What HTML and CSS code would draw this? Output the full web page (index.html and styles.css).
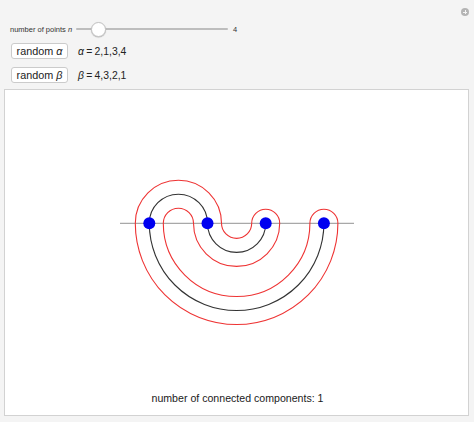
FILE: index.html
```html
<!DOCTYPE html>
<html>
<head>
<meta charset="utf-8">
<link rel="stylesheet" href="styles.css">
</head>
<body>
<div class="panel">
  <div class="plus"></div>
  <div class="row slider-row">
    <span class="label">number of points <i>n</i></span>
    <div class="slider"><div class="track"></div><div class="thumb"></div></div>
    <span class="value">4</span>
  </div>
  <div class="row btn-row first">
    <div class="btn"><span>random <i>α</i></span></div>
    <span class="perm"><i>α</i> = 2,1,3,4</span>
  </div>
  <div class="row btn-row">
    <div class="btn"><span>random <i>β</i></span></div>
    <span class="perm"><i>β</i> = 4,3,2,1</span>
  </div>
  <div class="plot">
    <svg class="fig" width="463" height="300" viewBox="5 90 463 300">
      <line x1="120" y1="223.3" x2="354" y2="223.3" stroke="#a8a8a8" stroke-width="1.2"/>
      <path d="M279.7 223.3 A43.1 43.1 0 0 1 193.5 223.3 A15.1 15.1 0 0 0 163.3 223.3 A73.3 73.3 0 0 0 309.9 223.3 A14 14 0 0 1 337.9 223.3 A101.3 101.3 0 0 1 135.3 223.3 A43.1 43.1 0 0 1 221.5 223.3 A15.1 15.1 0 0 0 251.7 223.3 A14 14 0 0 1 279.7 223.3 Z" fill="none" stroke="#ee3333" stroke-width="1.1"/>
      <path d="M265.7 223.3 A29.1 29.1 0 0 1 207.5 223.3 A29.1 29.1 0 0 0 149.3 223.3 A87.3 87.3 0 0 0 323.9 223.3" fill="none" stroke="#333" stroke-width="1.1"/>
      <circle cx="149.3" cy="223.3" r="6" fill="#0000f0"/>
      <circle cx="207.5" cy="223.3" r="6" fill="#0000f0"/>
      <circle cx="265.7" cy="223.3" r="6" fill="#0000f0"/>
      <circle cx="323.9" cy="223.3" r="6" fill="#0000f0"/>
    </svg>
    <div class="caption">number of connected components: 1</div>
  </div>
</div>
</body>
</html>
```
FILE: styles.css
```css
html, body {
  margin: 0;
  padding: 0;
}
body {
  width: 474px;
  height: 422px;
  background: #f4f4f4;
  font-family: "Liberation Sans", Arial, sans-serif;
  color: #222;
  overflow: hidden;
}
.panel {
  position: relative;
  height: 422px;
  box-sizing: border-box;
  padding-top: 20px;
  border-top: 3px solid #fafafa;
  margin-top: -3px;
}
.plus {
  position: absolute;
  right: 5px;
  top: 8px;
  width: 8px;
  height: 8px;
  border-radius: 50%;
  background: #b4b4b4;
}
.plus::before, .plus::after {
  content: "";
  position: absolute;
  background: #f4f4f4;
}
.plus::before { left: 2px; top: 3.5px; width: 4px; height: 1px; }
.plus::after { left: 3.5px; top: 2px; width: 1px; height: 4px; }
.row {
  display: flex;
  align-items: center;
}
.slider-row {
  height: 18px;
  padding-left: 10px;
}
.label {
  font-size: 7.5px;
  color: #333;
  width: 66px;
}
.slider {
  position: relative;
  width: 152px;
  height: 18px;
}
.track {
  position: absolute;
  left: 0;
  right: 0;
  top: 8px;
  height: 2px;
  background: #bdbdbd;
  border-radius: 1px;
}
.thumb {
  position: absolute;
  left: 15px;
  top: 2px;
  width: 13px;
  height: 13px;
  border-radius: 50%;
  background: #fff;
  border: 0.5px solid #c4c4c4;
  box-shadow: 0 0.5px 1px rgba(0,0,0,0.25);
}
.value {
  font-size: 7.5px;
  color: #333;
  margin-left: 5px;
}
.btn-row {
  padding-left: 11px;
  margin-top: 8px;
  height: 16px;
}
.btn-row.first {
  margin-top: 5px;
}
.btn {
  box-sizing: border-box;
  width: 57px;
  height: 16px;
  border: 1px solid #cbcbcb;
  border-radius: 3px;
  background: #fff;
  font-size: 10.8px;
  display: flex;
  align-items: center;
  justify-content: center;
  color: #222;
  white-space: nowrap;
}
.perm {
  margin-left: 10px;
  font-size: 10.4px;
  word-spacing: -0.6px;
  color: #222;
  white-space: nowrap;
}
.plot {
  margin-top: 6px;
  margin-left: 4px;
  width: 465px;
  height: 327px;
  box-sizing: border-box;
  background: #fff;
  border: 1px solid #d2d2d2;
}
.fig {
  display: block;
}
.caption {
  height: 16px;
  line-height: 16px;
  text-align: center;
  font-size: 10.6px;
  color: #1a1a1a;
  padding-left: 2px;
}
```
